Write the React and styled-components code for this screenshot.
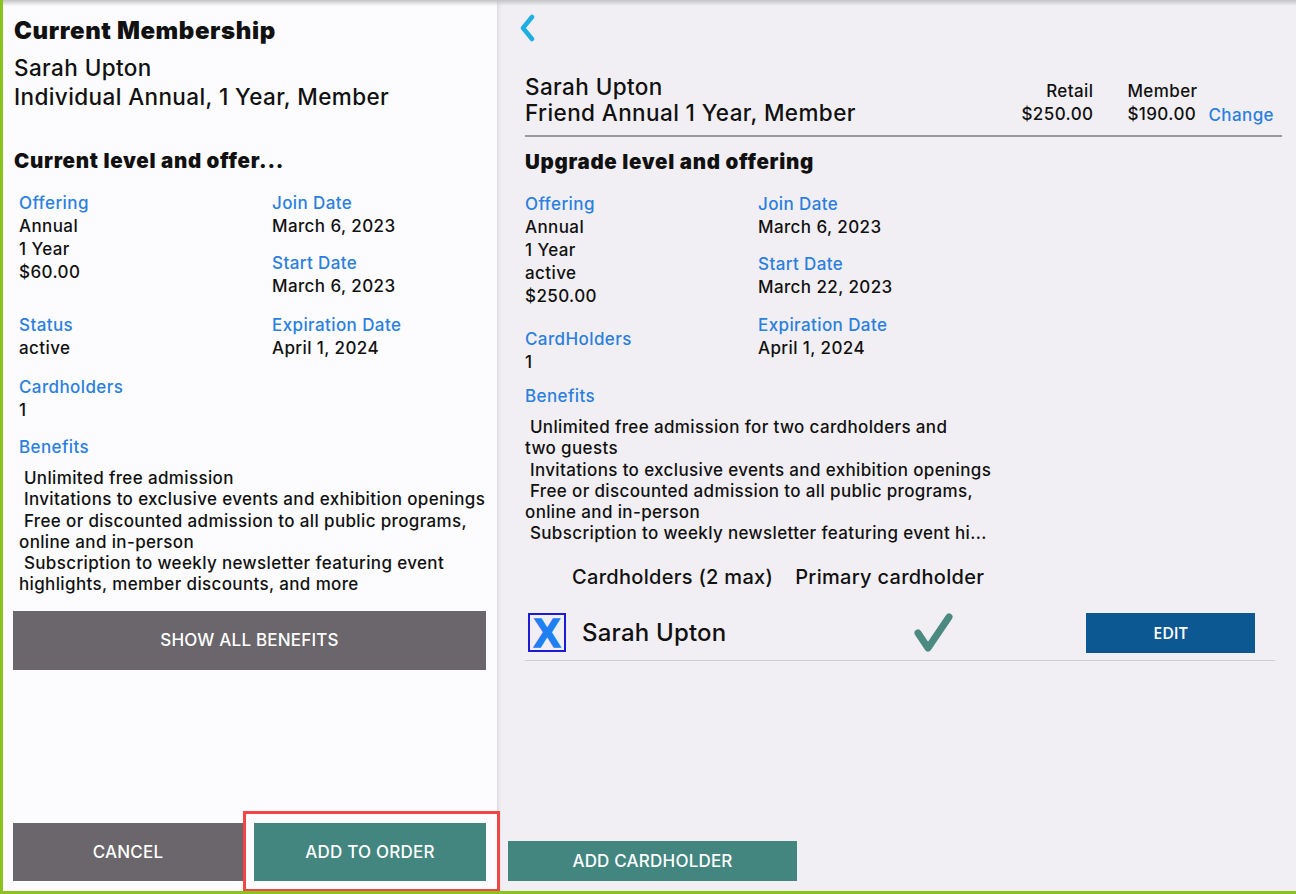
import React from "react";
import styled, { createGlobalStyle } from "styled-components";

const GlobalStyle = createGlobalStyle`
  html, body, #root {
    margin: 0;
    padding: 0;
    height: 100%;
  }
  body {
    font-family: Inter, "Liberation Sans", sans-serif;
    color: #111;
  }
  * { box-sizing: border-box; }
`;

const Frame = styled.div`
  position: relative;
  height: 100vh;
  display: flex;
  border-left: 3px solid #8cc21f;
  border-bottom: 3px solid #8cc21f;
  overflow: hidden;

  &:before {
    content: "";
    position: absolute;
    left: 0;
    right: 0;
    top: 0;
    height: 6px;
    background: linear-gradient(#c4c4c6, rgba(200, 200, 202, 0));
    z-index: 2;
  }
`;

const LeftPanel = styled.section`
  width: 494px;
  flex-shrink: 0;
  display: flex;
  flex-direction: column;
  padding: 16px 11px 10px 10px;
  background: #fcfbfe;
`;

const RightPanel = styled.section`
  flex: 1;
  display: flex;
  flex-direction: column;
  padding: 14px 14px 10px 10px;
  background: #f1eff3;
  border-left: 1px solid #dcdbde;
  box-shadow: inset 3px 0 4px -2px rgba(0, 0, 0, 0.08);
`;

const Heading = styled.h1`
  margin: 0 0 0 1px;
  font-size: 24px;
  line-height: 30px;
  font-weight: 900;
  letter-spacing: 0.6px;
`;

const SubHeading = styled.h2`
  margin: ${(p) => p.$top || "37px"} 0 18px ${(p) => p.$left || "1px"};
  font-size: 20.5px;
  line-height: 26px;
  font-weight: 900;
  letter-spacing: 0.7px;
`;

const NameBlock = styled.div`
  margin: ${(p) => p.$margin || "7px 0 0 1px"};
  font-size: 22.5px;
  line-height: ${(p) => p.$lh || "29px"};
  font-weight: 500;
  letter-spacing: 0.4px;
`;

const Body = styled.div`
  margin-left: ${(p) => p.$left || "6px"};
  display: flex;
  flex-direction: column;
`;

const Grid = styled.div`
  display: grid;
  grid-template-columns: ${(p) => p.$col}px 1fr;
  row-gap: ${(p) => p.$rowGap || 16}px;
`;

const Column = styled.div`
  display: flex;
  flex-direction: column;
  gap: ${(p) => p.$gap || 14}px;
`;

const Field = styled.div`
  display: flex;
  flex-direction: column;
  font-size: 17px;
  line-height: 23px;
  letter-spacing: 0.4px;
  font-weight: 500;
  margin-top: ${(p) => p.$top || 0}px;
`;

const Label = styled.span`
  color: #2b7fdf;
`;

const Value = styled.span`
  color: #111;
`;

const Benefits = styled.div`
  margin-top: 9px;
  font-size: 17px;
  line-height: 21.3px;
  font-weight: 500;
  letter-spacing: 0.36px;
  white-space: pre;
`;

const WideButton = styled.button`
  margin-top: 15px;
  height: 59px;
  width: 100%;
  border: none;
  background: #6a666b;
  color: #fff;
  font-family: Inter, "Liberation Sans", sans-serif;
  font-size: 17px;
  font-weight: 500;
  letter-spacing: 0.2px;
`;

const Footer = styled.div`
  margin-top: auto;
  display: flex;
  gap: 11px;
`;

const ActionButton = styled.button`
  width: ${(p) => p.$w}px;
  height: ${(p) => p.$h || 58}px;
  border: none;
  background: ${(p) => (p.$tone === "gray" ? "#6a666b" : "#42867f")};
  color: #fff;
  font-family: Inter, "Liberation Sans", sans-serif;
  font-size: 17px;
  font-weight: 500;
  letter-spacing: 0.2px;
`;

const Highlight = styled.div`
  position: absolute;
  left: 240px;
  top: 811px;
  width: 257px;
  height: 81px;
  border: 3px solid #f24646;
  pointer-events: none;
`;

const Back = styled.div`
  margin-left: 11px;
  height: 32px;
  display: flex;
  align-items: flex-start;
`;

const HeaderRow = styled.div`
  margin: 28px 0 0 17px;
  display: flex;
  align-items: flex-end;
  padding-bottom: 9px;
  border-bottom: 2px solid #9b9a9d;
`;

const Prices = styled.div`
  margin-left: auto;
  display: flex;
  align-items: flex-end;
  font-size: 17px;
  line-height: 23px;
  font-weight: 500;
  letter-spacing: 0.4px;
  padding-right: 8px;
`;

const PriceCol = styled.div`
  display: flex;
  flex-direction: column;
  align-items: ${(p) => (p.$left ? "flex-start" : "flex-end")};
  margin-left: ${(p) => p.$ml || 0}px;
`;

const LinkText = styled.span`
  color: #2b7fdf;
  margin-left: 11px;
  margin-bottom: -1px;
`;

const HoldersHead = styled.div`
  margin: 19px 0 0 47px;
  display: flex;
  gap: 22px;
  font-size: 20px;
  line-height: 26px;
  font-weight: 500;
  letter-spacing: 0.3px;
`;

const HolderRow = styled.div`
  margin: 22px 7px 0 0;
  display: grid;
  grid-template-columns: 54px 331px 173px 170px;
  align-items: center;
  padding: 0 0 6px 3px;
  border-bottom: 1px solid #d2cfd4;
`;

const CheckBox = styled.span`
  width: 38px;
  height: 39px;
  border: 2px solid #1c1cd4;
  display: flex;
  align-items: center;
  justify-content: center;
  color: #1f80f2;
  font-family: "Liberation Sans", sans-serif;
  font-size: 40px;
  font-weight: 900;
  line-height: 1;
  -webkit-text-stroke: 1.5px #1f80f2;
`;

const HolderName = styled.span`
  font-size: 24px;
  font-weight: 500;
  letter-spacing: 0.2px;
`;

const EditButton = styled.button`
  width: 169px;
  height: 40px;
  border: none;
  background: #0c5893;
  color: #fff;
  font-family: "Open Sans", sans-serif;
  font-size: 16px;
  font-weight: 600;
`;

const BottomBar = styled.div`
  margin-top: auto;
`;

const Chevron = () => (
  <svg width="18" height="28" viewBox="0 0 18 28">
    <polyline points="13,3 4,14 13,25" fill="none" stroke="#1eaee2" strokeWidth="4.5" strokeLinecap="round" strokeLinejoin="round" />
  </svg>
);

const Check = () => (
  <svg width="42" height="42" viewBox="0 0 42 42">
    <polyline points="5,21 15,36 36,5" fill="none" stroke="#4b8a80" strokeWidth="7" strokeLinecap="round" strokeLinejoin="round" />
  </svg>
);

const leftBenefits = [
  " Unlimited free admission",
  " Invitations to exclusive events and exhibition openings",
  " Free or discounted admission to all public programs,",
  "online and in-person",
  " Subscription to weekly newsletter featuring event",
  "highlights, member discounts, and more",
].join("\n");

const rightBenefits = [
  " Unlimited free admission for two cardholders and",
  "two guests",
  " Invitations to exclusive events and exhibition openings",
  " Free or discounted admission to all public programs,",
  "online and in-person",
  " Subscription to weekly newsletter featuring event hi...",
].join("\n");

function App() {
  return (
    <Frame>
      <GlobalStyle />
      <LeftPanel>
        <Heading>Current Membership</Heading>
        <NameBlock>
          Sarah Upton
          <br />
          Individual Annual, 1 Year, Member
        </NameBlock>
        <SubHeading>Current level and offer...</SubHeading>
        <Body>
          <Grid $col={253}>
            <Field>
              <Label>Offering</Label>
              <Value>Annual</Value>
              <Value>1 Year</Value>
              <Value>$60.00</Value>
            </Field>
            <Column>
              <Field>
                <Label>Join Date</Label>
                <Value>March 6, 2023</Value>
              </Field>
              <Field>
                <Label>Start Date</Label>
                <Value>March 6, 2023</Value>
              </Field>
            </Column>
            <Field>
              <Label>Status</Label>
              <Value>active</Value>
            </Field>
            <Field>
              <Label>Expiration Date</Label>
              <Value>April 1, 2024</Value>
            </Field>
          </Grid>
          <Field $top={16}>
            <Label>Cardholders</Label>
            <Value>1</Value>
          </Field>
          <Field $top={14}>
            <Label>Benefits</Label>
          </Field>
          <Benefits>{leftBenefits}</Benefits>
        </Body>
        <WideButton>SHOW ALL BENEFITS</WideButton>
        <Footer>
          <ActionButton $w={230} $tone="gray">CANCEL</ActionButton>
          <ActionButton $w={232}>ADD TO ORDER</ActionButton>
        </Footer>
      </LeftPanel>

      <RightPanel>
        <Back>
          <Chevron />
        </Back>
        <HeaderRow>
          <NameBlock $margin="0" $lh="26px">
            Sarah Upton
            <br />
            Friend Annual 1 Year, Member
          </NameBlock>
          <Prices>
            <PriceCol>
              <span>Retail</span>
              <span>$250.00</span>
            </PriceCol>
            <PriceCol $left $ml={34}>
              <span>Member</span>
              <span>$190.00</span>
            </PriceCol>
            <LinkText>Change</LinkText>
          </Prices>
        </HeaderRow>
        <SubHeading $top="12px" $left="17px">Upgrade level and offering</SubHeading>
        <Body $left="17px">
          <Grid $col={233}>
            <Column $gap={20}>
              <Field>
                <Label>Offering</Label>
                <Value>Annual</Value>
                <Value>1 Year</Value>
                <Value>active</Value>
                <Value>$250.00</Value>
              </Field>
              <Field>
                <Label>CardHolders</Label>
                <Value>1</Value>
              </Field>
            </Column>
            <Column $gap={14}>
              <Field>
                <Label>Join Date</Label>
                <Value>March 6, 2023</Value>
              </Field>
              <Field>
                <Label>Start Date</Label>
                <Value>March 22, 2023</Value>
              </Field>
              <Field $top={1}>
                <Label>Expiration Date</Label>
                <Value>April 1, 2024</Value>
              </Field>
            </Column>
          </Grid>
          <Field $top={11}>
            <Label>Benefits</Label>
          </Field>
          <Benefits>{rightBenefits}</Benefits>
          <HoldersHead>
            <span>Cardholders (2 max)</span>
            <span>Primary cardholder</span>
          </HoldersHead>
          <HolderRow>
            <CheckBox>X</CheckBox>
            <HolderName>Sarah Upton</HolderName>
            <Check />
            <EditButton>EDIT</EditButton>
          </HolderRow>
        </Body>
        <BottomBar>
          <ActionButton $w={289} $h={40}>ADD CARDHOLDER</ActionButton>
        </BottomBar>
      </RightPanel>
      <Highlight />
    </Frame>
  );
}

export default App;
